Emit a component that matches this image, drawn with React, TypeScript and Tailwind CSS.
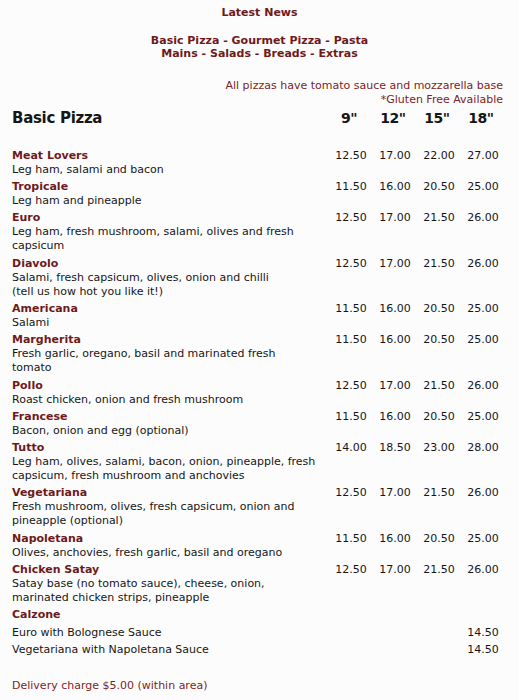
const pizzas = [
  { name: "Meat Lovers", desc: ["Leg ham, salami and bacon"], prices: ["12.50", "17.00", "22.00", "27.00"] },
  { name: "Tropicale", desc: ["Leg ham and pineapple"], prices: ["11.50", "16.00", "20.50", "25.00"] },
  { name: "Euro", desc: ["Leg ham, fresh mushroom, salami, olives and fresh", "capsicum"], prices: ["12.50", "17.00", "21.50", "26.00"] },
  { name: "Diavolo", desc: ["Salami, fresh capsicum, olives, onion and chilli", "(tell us how hot you like it!)"], prices: ["12.50", "17.00", "21.50", "26.00"] },
  { name: "Americana", desc: ["Salami"], prices: ["11.50", "16.00", "20.50", "25.00"] },
  { name: "Margherita", desc: ["Fresh garlic, oregano, basil and marinated fresh", "tomato"], prices: ["11.50", "16.00", "20.50", "25.00"] },
  { name: "Pollo", desc: ["Roast chicken, onion and fresh mushroom"], prices: ["12.50", "17.00", "21.50", "26.00"] },
  { name: "Francese", desc: ["Bacon, onion and egg (optional)"], prices: ["11.50", "16.00", "20.50", "25.00"] },
  { name: "Tutto", desc: ["Leg ham, olives, salami, bacon, onion, pineapple, fresh", "capsicum, fresh mushroom and anchovies"], prices: ["14.00", "18.50", "23.00", "28.00"] },
  { name: "Vegetariana", desc: ["Fresh mushroom, olives, fresh capsicum, onion and", "pineapple (optional)"], prices: ["12.50", "17.00", "21.50", "26.00"] },
  { name: "Napoletana", desc: ["Olives, anchovies, fresh garlic, basil and oregano"], prices: ["11.50", "16.00", "20.50", "25.00"] },
  { name: "Chicken Satay", desc: ["Satay base (no tomato sauce), cheese, onion,", "marinated chicken strips, pineapple"], prices: ["12.50", "17.00", "21.50", "26.00"] },
];

const calzone = [
  { name: "Euro with Bolognese Sauce", price: "14.50" },
  { name: "Vegetariana with Napoletana Sauce", price: "14.50" },
];

export default function App() {
  return (
    <div className="min-h-[700px] w-[519px] bg-[#fcfcfd] font-['DejaVu_Sans',Verdana,sans-serif] text-[11px] leading-[14px] text-[#161616]">
      <div className="pt-[6px] text-center font-bold text-[#6e1a1a]">Latest News</div>
      <div className="mt-[14px] text-center font-bold leading-[13px] text-[#6e1a1a]">
        <div>Basic Pizza - Gourmet Pizza - Pasta</div>
        <div>Mains - Salads - Breads - Extras</div>
      </div>
      <div className="mt-[19px] pr-[16px] text-right text-[#7c2424]">
        <div>All pizzas have tomato sauce and mozzarella base</div>
        <div>*Gluten Free Available</div>
      </div>

      <div className="grid grid-cols-[1fr_44px_44px_44px_44px] pl-[12px] pr-[14px]">
        <div className="pt-[1px] text-[15px] font-bold leading-[20px] tracking-[-0.3px]">Basic Pizza</div>
        {['9"', '12"', '15"', '18"'].map((s) => (
          <div key={s} className="pt-[1px] pr-[4px] text-center text-[14px] font-bold leading-[20px] tracking-[-0.5px]">
            {s}
          </div>
        ))}
        <div className="col-span-5 h-[19px]" />

        {pizzas.map((p) => (
          <div key={p.name} className="contents">
            <div className="py-[1.67px] pr-[4px] whitespace-nowrap">
              <div className="font-bold text-[#6e1a1a]">{p.name}</div>
              {p.desc.map((d) => (
                <div key={d}>{d}</div>
              ))}
            </div>
            {p.prices.map((pr, i) => (
              <div key={i} className="py-[1.67px] text-center">
                {pr}
              </div>
            ))}
          </div>
        ))}

        <div className="col-span-5 py-[1.67px] font-bold text-[#6e1a1a]">Calzone</div>
        {calzone.map((c) => (
          <div key={c.name} className="contents">
            <div className="col-span-4 py-[1.67px]">{c.name}</div>
            <div className="py-[1.67px] text-center">{c.price}</div>
          </div>
        ))}
      </div>

      <div className="mt-[20px] pl-[12px] text-[#7c2424]">Delivery charge $5.00 (within area)</div>
    </div>
  );
}
